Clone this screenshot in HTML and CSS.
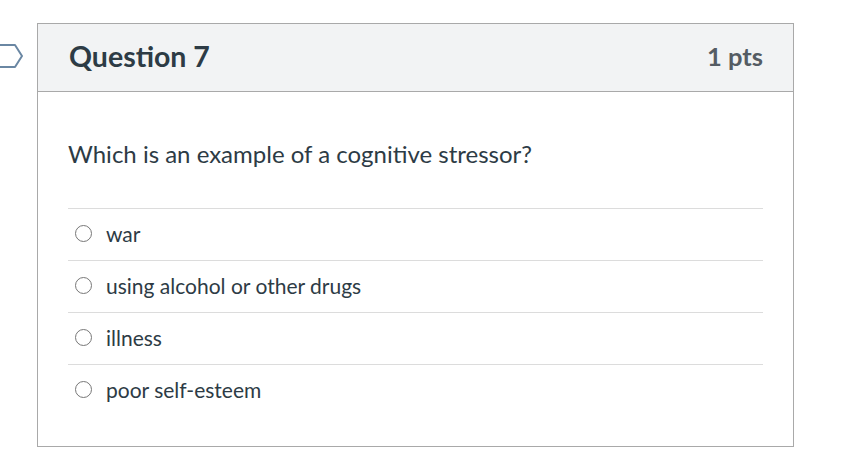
FILE: index.html
```html
<!DOCTYPE html>
<html>
<head>
<meta charset="utf-8">
<link rel="stylesheet" href="styles.css">
</head>
<body>
<div class="page">
  <div class="flag">
    <svg width="37" height="26" viewBox="0 0 37 26">
      <path d="M-5 1 H15 L22 12 L15 23 H-5" fill="none" stroke="#6a87a3" stroke-width="2" stroke-linejoin="round"/>
    </svg>
  </div>
  <div class="card">
    <div class="header">
      <div class="title">Question 7</div>
      <div class="pts">1 pts</div>
    </div>
    <div class="body">
      <div class="qtext">Which is an example of a cognitive stressor?</div>
      <div class="answers">
        <label class="answer"><span class="radio"></span><span class="label">war</span></label>
        <label class="answer"><span class="radio"></span><span class="label">using alcohol or other drugs</span></label>
        <label class="answer"><span class="radio"></span><span class="label">illness</span></label>
        <label class="answer"><span class="radio"></span><span class="label">poor self-esteem</span></label>
      </div>
    </div>
  </div>
</div>
</body>
</html>
```
FILE: styles.css
```css
* { box-sizing: border-box; }
body {
  margin: 0;
  background: #fff;
  font-family: Lato, "Liberation Sans", sans-serif;
  color: #2d3b45;
}
.page {
  display: flex;
  padding-top: 23px;
}
.flag {
  width: 37px;
  padding-top: 21px;
  flex: none;
}
.flag svg { display: block; }
.card {
  width: 757px;
  height: 424px;
  border: 1px solid #a9a9a9;
}
.header {
  height: 68px;
  background: #f2f3f4;
  border-bottom: 1px solid #a9a9a9;
  display: flex;
  align-items: center;
  justify-content: space-between;
  padding: 0 30px 4px 31px;
}
.title {
  font-size: 28.5px;
  font-weight: 700;
  color: #2d3b45;
}
.pts {
  font-size: 25.5px;
  font-weight: 700;
  color: #555c63;
}
.body {
  padding: 46px 30px 0 30px;
}
.qtext {
  font-size: 24px;
  line-height: 32px;
  margin-bottom: 38px;
}
.answer {
  display: flex;
  align-items: center;
  height: 52px;
  border-top: 1px solid #dcdcdc;
  padding-left: 7px;
  padding-bottom: 2px;
  font-size: 21px;
}
.radio {
  width: 17px;
  height: 17px;
  border: 1.8px solid #777;
  border-radius: 50%;
  margin-right: 14px;
  flex: none;
}
.label { color: #2d3b45; }
```
